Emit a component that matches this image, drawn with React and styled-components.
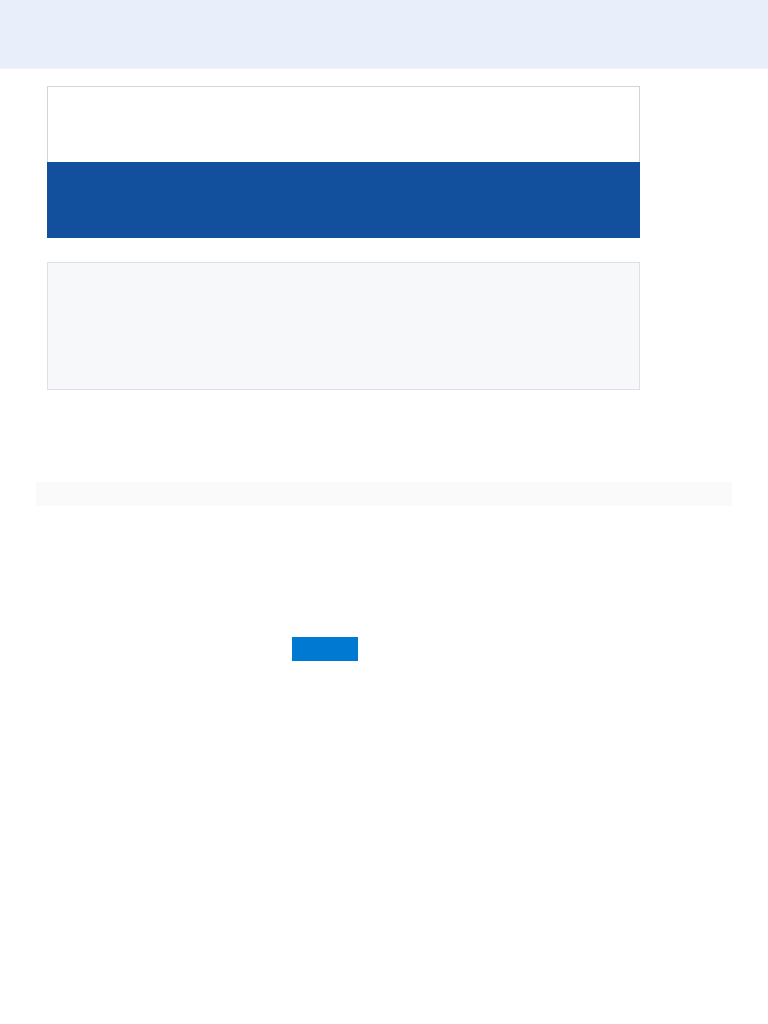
import React from "react";
import styled, { createGlobalStyle } from "styled-components";

const Global = createGlobalStyle`
  html, body { margin: 0; padding: 0; background: #ffffff; }
  body { font-family: "Liberation Sans", Arial, sans-serif; }
  * { box-sizing: border-box; }
`;

const Page = styled.div`
  width: 768px;
  min-height: 1024px;
  display: flex;
  flex-direction: column;
`;

const Header = styled.header`
  height: 69px;
  background: #e8effa;
  border-bottom: 1px solid #eef3fc;
`;

const Content = styled.main`
  display: flex;
  flex-direction: column;
  padding: 17px 0 0 47px;
  width: 640px;
`;

const Hero = styled.section`
  display: flex;
  flex-direction: column;
  height: 152px;
  border: 1px solid #d4d4d4;
  border-bottom: none;
  background: #ffffff;
`;

const HeroTop = styled.div`
  height: 75px;
`;

const HeroBand = styled.div`
  flex: 1;
  margin: 0 -1px;
  background: #124f9d;
`;

const Panel = styled.section`
  margin-top: 24px;
  height: 128px;
  background: #f7f8fa;
  border: 1px solid #dde1e7;
`;

const Strip = styled.div`
  margin: 92px 36px 0 36px;
  height: 24px;
  background: #fafafa;
`;

const ButtonRow = styled.div`
  display: flex;
  padding-left: 292px;
  margin-top: 131px;
`;

const PrimaryButton = styled.button`
  width: 66px;
  height: 24px;
  border: none;
  padding: 0;
  background: #0079d2;
  cursor: pointer;
`;

export default function App() {
  return (
    <Page>
      <Global />
      <Header />
      <Content>
        <Hero>
          <HeroTop />
          <HeroBand />
        </Hero>
        <Panel />
      </Content>
      <Strip />
      <ButtonRow>
        <PrimaryButton aria-label="button" />
      </ButtonRow>
    </Page>
  );
}
